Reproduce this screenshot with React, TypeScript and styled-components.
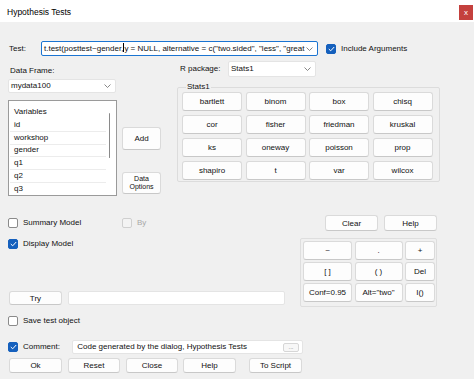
import React from "react";
import styled, { createGlobalStyle, css } from "styled-components";

const GlobalStyle = createGlobalStyle`
  * { box-sizing: border-box; }
  html, body { margin: 0; padding: 0; background: #f0f0f0; }
  body {
    font-family: "Liberation Sans", Arial, sans-serif;
    font-size: 8px;
    color: #111;
  }
`;

const Window = styled.div`
  width: 474px;
  height: 379px;
  background: #f0f0f0;
  overflow: hidden;
  display: flex;
  flex-direction: column;
`;

const TitleBar = styled.div`
  height: 22px;
  background: #ffffff;
  display: flex;
  align-items: flex-start;
  justify-content: space-between;
  padding-left: 7px;
`;

const Title = styled.span`
  font-size: 8.5px;
  line-height: 10px;
  margin-top: 7px;
  color: #000;
`;

const CloseButton = styled.div`
  width: 14px;
  height: 15px;
  margin-top: 5px;
  margin-right: 1px;
  background: #c4403d;
  color: #fff;
  font-size: 8px;
  display: flex;
  align-items: center;
  justify-content: center;
`;

const Body = styled.div`
  padding-left: 8px;
  display: flex;
  flex-direction: column;
`;

const Row = styled.div<{ $top: number; $h?: number }>`
  display: flex;
  align-items: center;
  margin-top: ${(p) => p.$top}px;
  height: ${(p) => p.$h ?? 16}px;
`;

const Label = styled.span<{ $w?: number; $pl?: number }>`
  display: inline-block;
  ${(p) => p.$w !== undefined && css`width: ${p.$w}px;`}
  padding-left: ${(p) => p.$pl ?? 0}px;
  line-height: 10px;
  white-space: nowrap;
  color: #111;
`;

const Field = styled.div<{ $w: number; $h?: number; $focus?: boolean; $ml?: number }>`
  width: ${(p) => p.$w}px;
  height: ${(p) => p.$h ?? 14}px;
  margin-left: ${(p) => p.$ml ?? 0}px;
  background: #fff;
  border: 1px solid ${(p) => (p.$focus ? "#1b74d1" : "#e4e4e4")};
  border-radius: 2px;
  display: flex;
  align-items: center;
  padding: 0 3px 0 2px;
  overflow: hidden;
  white-space: nowrap;
`;

const FieldText = styled.span`
  flex: 1;
  white-space: nowrap;
  line-height: 10px;
  color: #111;
`;

const Caret = styled.span`
  display: inline-block;
  width: 1px;
  height: 9px;
  background: #000;
  vertical-align: -1px;
`;

const ChevronBox = styled.span`
  display: flex;
  align-items: center;
  justify-content: center;
  width: 9px;
  flex: none;
`;

const Chevron = () => (
  <ChevronBox>
    <svg width="7" height="4" viewBox="0 0 7 4">
      <polyline points="0.5,0.5 3.5,3.5 6.5,0.5" fill="none" stroke="#6a6a6a" strokeWidth="0.8" />
    </svg>
  </ChevronBox>
);

const CheckItemWrap = styled.div<{ $w?: number; $ml?: number }>`
  display: flex;
  align-items: center;
  ${(p) => p.$w !== undefined && css`width: ${p.$w}px;`}
  margin-left: ${(p) => p.$ml ?? 0}px;
  flex: none;
`;

const Box = styled.span<{ $checked?: boolean; $disabled?: boolean }>`
  width: 10px;
  height: 10px;
  border-radius: 2px;
  flex: none;
  display: flex;
  align-items: center;
  justify-content: center;
  ${(p) =>
    p.$checked
      ? css`background: #1560bd; border: 1px solid #1560bd;`
      : p.$disabled
      ? css`background: #f3f3f3; border: 1px solid #cfcfcf;`
      : css`background: #fff; border: 1px solid #8a8a8a;`}
`;

const CheckLabel = styled.span<{ $disabled?: boolean }>`
  margin-left: 5px;
  line-height: 10px;
  white-space: nowrap;
  color: ${(p) => (p.$disabled ? "#a8a8a8" : "#111")};
`;

const CheckItem = ({
  label,
  checked,
  disabled,
  w,
  ml,
}: {
  label: string;
  checked?: boolean;
  disabled?: boolean;
  w?: number;
  ml?: number;
}) => (
  <CheckItemWrap $w={w} $ml={ml}>
    <Box $checked={checked} $disabled={disabled}>
      {checked && (
        <svg width="7" height="6" viewBox="0 0 7 6">
          <polyline points="0.8,3 2.7,4.8 6.2,1" fill="none" stroke="#fff" strokeWidth="1" />
        </svg>
      )}
    </Box>
    <CheckLabel $disabled={disabled}>{label}</CheckLabel>
  </CheckItemWrap>
);

const Button = styled.div<{ $w?: number; $h?: number; $ml?: number }>`
  ${(p) => p.$w !== undefined && css`width: ${p.$w}px;`}
  height: ${(p) => p.$h ?? 15}px;
  margin-left: ${(p) => p.$ml ?? 0}px;
  flex: none;
  background: #fdfdfd;
  border: 1px solid #dadada;
  border-bottom-color: #c8c8c8;
  border-radius: 3px;
  display: flex;
  align-items: center;
  justify-content: center;
  text-align: center;
  line-height: 9px;
  color: #111;
  white-space: nowrap;
`;

const SmallButtonText = styled.span`
  font-size: 7px;
  line-height: 8px;
  white-space: normal;
`;

const Upper = styled.div`
  display: flex;
  margin-top: 1px;
`;

const LeftCol = styled.div`
  width: 153px;
  display: flex;
  flex-direction: column;
`;

const RightCol = styled.div`
  margin-left: 16px;
  display: flex;
  flex-direction: column;
`;

const DataFrameLabel = styled(Label)`
  margin-top: 9px;
  padding-left: 2px;
`;

const ListArea = styled.div`
  display: flex;
  margin-top: 7px;
`;

const ListBox = styled.div`
  width: 109px;
  height: 96px;
  background: #fff;
  border: 1px solid #9a9a9a;
  padding: 3px 0 0 1px;
  position: relative;
  overflow: hidden;
  display: flex;
  flex-direction: column;
`;

const ListItem = styled.div<{ $line?: boolean; $head?: boolean }>`
  height: ${(p) => (p.$head ? 15 : 12.8)}px;
  flex: none;
  padding-left: 4px;
  margin-right: 10px;
  display: flex;
  align-items: center;
  line-height: 10px;
  color: #111;
  border-bottom: ${(p) => (p.$line ? "1px solid #ececec" : "none")};
`;

const ScrollThumb = styled.div`
  position: absolute;
  right: 6px;
  top: 12px;
  width: 1.5px;
  height: 45px;
  background: #8a8a8a;
  border-radius: 1px;
`;

const ListButtons = styled.div`
  margin-left: 5px;
  display: flex;
  flex-direction: column;
  padding-top: 27px;
  gap: 22px;
`;

const RPackageRow = styled.div`
  display: flex;
  align-items: center;
  height: 16px;
  margin-top: 4px;
  padding-left: 3px;
`;

const Group = styled.fieldset`
  margin: 5px 0 0 0;
  padding: 0 6px 1px 4px;
  width: 262px;
  border: 1px solid #dcdcdc;
  border-radius: 2px;
`;

const Legend = styled.legend`
  padding: 0 1px;
  margin-left: 4px;
  line-height: 10px;
  font-size: 8px;
  color: #111;
`;

const StatsGrid = styled.div`
  display: grid;
  grid-template-columns: repeat(4, 60px);
  grid-auto-rows: 19px;
  column-gap: 3.5px;
  row-gap: 4px;
`;

const Mid = styled.div`
  display: flex;
  margin-top: 19px;
`;

const MidLeft = styled.div`
  width: 292px;
  display: flex;
  flex-direction: column;
`;

const MidRight = styled.div`
  display: flex;
  flex-direction: column;
`;

const ClearRow = styled.div`
  display: flex;
  height: 16px;
  padding-left: 25px;
  gap: 6px;
`;

const Keypad = styled.div`
  margin-top: 7px;
  width: 137px;
  height: 69px;
  border: 1px solid #dedede;
  border-radius: 2px;
  padding: 2px;
  display: grid;
  grid-template-columns: 49px 48px 30px;
  grid-auto-rows: 19px;
  column-gap: 2.5px;
  row-gap: 2px;
`;

const DotsButton = styled.span`
  flex: none;
  width: 16px;
  height: 9px;
  border: 1px solid #d6d6d6;
  border-radius: 2px;
  background: #f7f7f7;
  font-size: 6px;
  line-height: 6px;
  color: #777;
  display: flex;
  align-items: center;
  justify-content: center;
`;

const stats = [
  "bartlett", "binom", "box", "chisq",
  "cor", "fisher", "friedman", "kruskal",
  "ks", "oneway", "poisson", "prop",
  "shapiro", "t", "var", "wilcox",
];

const keys = ["~", ".", "+", "[ ]", "( )", "Del", "Conf=0.95", 'Alt="two"', "I()"];

const variables = ["id", "workshop", "gender", "q1", "q2", "q3"];

export default function App() {
  return (
    <>
      <GlobalStyle />
      <Window>
        <TitleBar>
          <Title>Hypothesis Tests</Title>
          <CloseButton>x</CloseButton>
        </TitleBar>
        <Body>
          <Row $top={19} $h={15}>
            <Label $w={33} $pl={1}>Test:</Label>
            <Field $w={277} $h={15} $focus>
              <FieldText>
                t.test(posttest~gender,<Caret />y = NULL, alternative = c("two.sided", "less", "great
              </FieldText>
              <Chevron />
            </Field>
            <CheckItem label="Include Arguments" checked ml={8} />
          </Row>

          <Upper>
            <LeftCol>
              <DataFrameLabel>Data Frame:</DataFrameLabel>
              <Row $top={3} $h={14}>
                <Field $w={108} $h={14}>
                  <FieldText>mydata100</FieldText>
                  <Chevron />
                </Field>
              </Row>
              <ListArea>
                <ListBox>
                  <ListItem $head>Variables</ListItem>
                  {variables.map((v, i) => (
                    <ListItem key={v} $line={i < variables.length - 1}>
                      {v}
                    </ListItem>
                  ))}
                  <ScrollThumb />
                </ListBox>
                <ListButtons>
                  <Button $w={39} $h={23}>Add</Button>
                  <Button $w={39} $h={22}>
                    <SmallButtonText>Data<br />Options</SmallButtonText>
                  </Button>
                </ListButtons>
              </ListArea>
            </LeftCol>

            <RightCol>
              <RPackageRow>
                <Label $w={48}>R package:</Label>
                <Field $w={88} $h={16}>
                  <FieldText>Stats1</FieldText>
                  <Chevron />
                </Field>
              </RPackageRow>
              <Group>
                <Legend>Stats1</Legend>
                <StatsGrid>
                  {stats.map((s) => (
                    <Button key={s} $h={19}>{s}</Button>
                  ))}
                </StatsGrid>
              </Group>
            </RightCol>
          </Upper>

          <Mid>
            <MidLeft>
              <Row $top={0}>
                <CheckItem label="Summary Model" w={114} />
                <CheckItem label="By" disabled />
              </Row>
              <Row $top={5}>
                <CheckItem label="Display Model" checked />
              </Row>
              <Row $top={39} $h={14}>
                <Button $w={53} $h={14} $ml={1}>Try</Button>
                <Field $w={217} $h={14} $ml={6} />
              </Row>
            </MidLeft>
            <MidRight>
              <ClearRow>
                <Button $w={53} $h={16}>Clear</Button>
                <Button $w={53} $h={16}>Help</Button>
              </ClearRow>
              <Keypad>
                {keys.map((k) => (
                  <Button key={k} $h={19}>{k}</Button>
                ))}
              </Keypad>
            </MidRight>
          </Mid>

          <Row $top={6}>
            <CheckItem label="Save test object" />
          </Row>

          <Row $top={10}>
            <CheckItem label="Comment:" checked w={64} />
            <Field $w={231} $h={14}>
              <FieldText>&nbsp;Code generated by the dialog, Hypothesis Tests</FieldText>
              <DotsButton>...</DotsButton>
            </Field>
          </Row>

          <Row $top={3} $h={15}>
            <Button $w={53} $ml={1}>Ok</Button>
            <Button $w={52} $ml={6}>Reset</Button>
            <Button $w={52} $ml={6}>Close</Button>
            <Button $w={53} $ml={5}>Help</Button>
            <Button $w={53} $ml={13}>To Script</Button>
          </Row>
        </Body>
      </Window>
    </>
  );
}
